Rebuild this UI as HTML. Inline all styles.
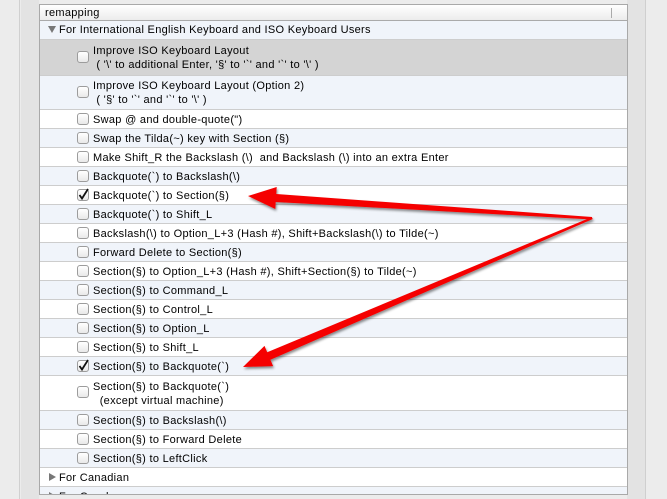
<!DOCTYPE html>
<html><head><meta charset="utf-8"><style>
*{margin:0;padding:0;box-sizing:border-box}
body{width:667px;height:499px;background:#ececec;position:relative;overflow:hidden;font-family:"Liberation Sans","DejaVu Sans",sans-serif;font-size:11px;letter-spacing:0.3px;color:#000}
.lstrip{position:absolute;left:0;top:0;width:20px;height:499px;background:#ececec;border-right:1px solid #d0d0d0}
.lgray{position:absolute;left:21px;top:0;width:18px;height:499px;background:#e3e3e3}
.rgray{position:absolute;left:627px;top:0;width:19px;height:499px;background:#e3e3e3;border-right:1px solid #cfcfcf}
.tbl{position:absolute;left:39px;top:4px;width:589px;height:491px;border:1px solid #a9a9a9;background:#fff;overflow:hidden}
.hdr{height:16px;background:linear-gradient(#fff,#ececec);border-bottom:1px solid #aaa;padding-left:5px;line-height:17px;position:relative}
.hdr:after{content:"";position:absolute;right:15px;top:3px;width:1px;height:10px;background:#aaa}
.r{position:absolute;left:0;width:587px;border-bottom:1px solid #cdcdcd;}
.b{background:#f0f4fa}.w{background:#fff}.s{background:#d4d4d4}
.t{position:absolute;left:53px;white-space:nowrap;line-height:14px}
.cb{position:absolute;left:37px;width:12px;height:12px;border:1px solid #9c9c9c;border-radius:3px;background:linear-gradient(#fff,#e9e9e9)}
.g{position:absolute;left:19px;white-space:nowrap;line-height:18px}
.tri{display:inline-block;width:0;height:0;margin-right:3px}
.down{border-left:4px solid transparent;border-right:4px solid transparent;border-top:7px solid #777}
.right{border-top:4px solid transparent;border-bottom:4px solid transparent;border-left:7px solid #777}
.g .right{position:relative;left:-10px;margin-right:-7px}
.g .down{position:relative;left:-11px;margin-right:-8px}
</style></head><body>
<div class="lstrip"></div><div class="lgray"></div><div class="rgray"></div>
<div class="tbl">
<div class="hdr">remapping</div>
<div class="r b" style="top:16px;height:19px"><div class="g" style="left:19px"><span class="tri down"></span>For International English Keyboard and ISO Keyboard Users</div></div>
<div class="r s" style="top:35px;height:36px"><div class="cb" style="top:11px"></div><div class="t" style="top:4px">Improve ISO Keyboard Layout<br>&nbsp;( '\' to additional Enter, '§' to '`' and '`' to '\' )</div></div>
<div class="r b" style="top:71px;height:34px"><div class="cb" style="top:10px"></div><div class="t" style="top:3px">Improve ISO Keyboard Layout (Option 2)<br>&nbsp;( '§' to '`' and '`' to '\' )</div></div>
<div class="r w" style="top:105px;height:19px"><div class="cb" style="top:3px"></div><div class="t" style="top:3px">Swap @ and double-quote(")</div></div>
<div class="r b" style="top:124px;height:19px"><div class="cb" style="top:3px"></div><div class="t" style="top:3px">Swap the Tilda(~) key with Section (§)</div></div>
<div class="r w" style="top:143px;height:19px"><div class="cb" style="top:3px"></div><div class="t" style="top:3px">Make Shift_R the Backslash (\)&nbsp; and Backslash (\) into an extra Enter</div></div>
<div class="r b" style="top:162px;height:19px"><div class="cb" style="top:3px"></div><div class="t" style="top:3px">Backquote(`) to Backslash(\)</div></div>
<div class="r w" style="top:181px;height:19px"><div class="cb" style="top:3px"></div><svg style="position:absolute;left:37px;top:1px" width="14" height="14"><path d="M2.5 8 L5 11.5 L11 2" stroke="#111" stroke-width="1.8" fill="none"/></svg><div class="t" style="top:3px">Backquote(`) to Section(§)</div></div>
<div class="r b" style="top:200px;height:19px"><div class="cb" style="top:3px"></div><div class="t" style="top:3px">Backquote(`) to Shift_L</div></div>
<div class="r w" style="top:219px;height:19px"><div class="cb" style="top:3px"></div><div class="t" style="top:3px">Backslash(\) to Option_L+3 (Hash #), Shift+Backslash(\) to Tilde(~)</div></div>
<div class="r b" style="top:238px;height:19px"><div class="cb" style="top:3px"></div><div class="t" style="top:3px">Forward Delete to Section(§)</div></div>
<div class="r w" style="top:257px;height:19px"><div class="cb" style="top:3px"></div><div class="t" style="top:3px">Section(§) to Option_L+3 (Hash #), Shift+Section(§) to Tilde(~)</div></div>
<div class="r b" style="top:276px;height:19px"><div class="cb" style="top:3px"></div><div class="t" style="top:3px">Section(§) to Command_L</div></div>
<div class="r w" style="top:295px;height:19px"><div class="cb" style="top:3px"></div><div class="t" style="top:3px">Section(§) to Control_L</div></div>
<div class="r b" style="top:314px;height:19px"><div class="cb" style="top:3px"></div><div class="t" style="top:3px">Section(§) to Option_L</div></div>
<div class="r w" style="top:333px;height:19px"><div class="cb" style="top:3px"></div><div class="t" style="top:3px">Section(§) to Shift_L</div></div>
<div class="r b" style="top:352px;height:19px"><div class="cb" style="top:3px"></div><svg style="position:absolute;left:37px;top:1px" width="14" height="14"><path d="M2.5 8 L5 11.5 L11 2" stroke="#111" stroke-width="1.8" fill="none"/></svg><div class="t" style="top:3px">Section(§) to Backquote(`)</div></div>
<div class="r w" style="top:371px;height:35px"><div class="cb" style="top:10px"></div><div class="t" style="top:4px">Section(§) to Backquote(`)<br>&nbsp;&nbsp;(except virtual machine)</div></div>
<div class="r b" style="top:406px;height:19px"><div class="cb" style="top:3px"></div><div class="t" style="top:3px">Section(§) to Backslash(\)</div></div>
<div class="r w" style="top:425px;height:19px"><div class="cb" style="top:3px"></div><div class="t" style="top:3px">Section(§) to Forward Delete</div></div>
<div class="r b" style="top:444px;height:19px"><div class="cb" style="top:3px"></div><div class="t" style="top:3px">Section(§) to LeftClick</div></div>
<div class="r w" style="top:463px;height:19px"><div class="g" style="top:1px"><span class="tri right"></span>For Canadian</div></div>
<div class="r b" style="top:482px;height:19px"><div class="g" style="top:1px"><span class="tri right"></span>For Czech</div></div>
</div>
<svg style="position:absolute;left:0;top:0" width="667" height="499">
<defs><filter id="sh" x="-10%" y="-10%" width="120%" height="130%"><feDropShadow dx="1" dy="2" stdDeviation="1.2" flood-color="#000" flood-opacity="0.45"/></filter></defs>
<g fill="#f50000" filter="url(#sh)">
<polygon points="592.1,217 276.3,194 276.7,187 248,196 275.3,209 275.7,202 591.9,219.5"/>
<polygon points="591.6,217.1 267.2,352.3 264.5,345.9 243,367 273.1,366.1 270.4,359.7 592.8,219"/>
</g></svg>
</body></html>
